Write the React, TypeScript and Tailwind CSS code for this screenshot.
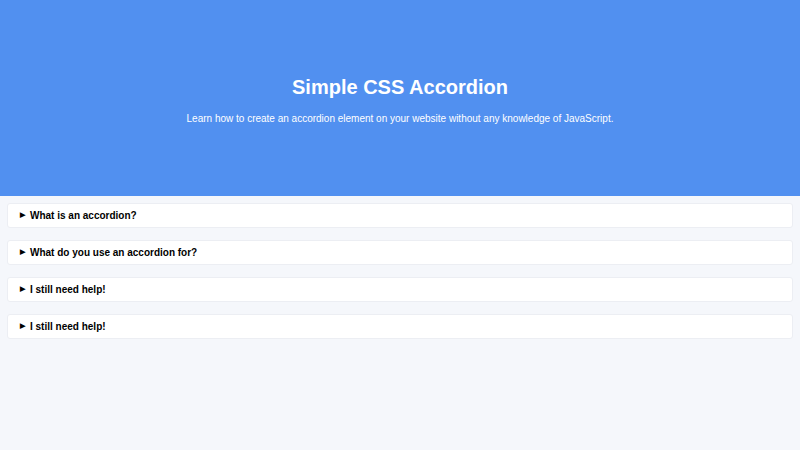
const questions = [
  'What is an accordion?',
  'What do you use an accordion for?',
  'I still need help!',
  'I still need help!',
]

export default function App() {
  return (
    <div className="min-h-[450px] bg-[#f5f7fb] font-['Liberation_Sans',Arial,sans-serif]">
      <header className="h-[196px] bg-[#5190f0] flex flex-col items-center justify-center text-white">
        <h1 className="text-[20px] font-bold leading-none mb-[17px] mt-[4px]">Simple CSS Accordion</h1>
        <p className="text-[10px] leading-none">
          Learn how to create an accordion element on your website without any knowledge of JavaScript.
        </p>
      </header>

      <main className="px-[7px] pt-[7px] flex flex-col gap-[12px]">
        {questions.map((q, i) => (
          <details key={i} className="bg-white border border-[#eceef3] rounded-[3px]">
            <summary className="h-[23px] pl-[12px] flex items-center cursor-pointer text-[10px] font-bold text-black list-none">
              <span className="text-[7px] mr-[5px]">▶</span>
              {q}
            </summary>
          </details>
        ))}
      </main>
    </div>
  )
}
